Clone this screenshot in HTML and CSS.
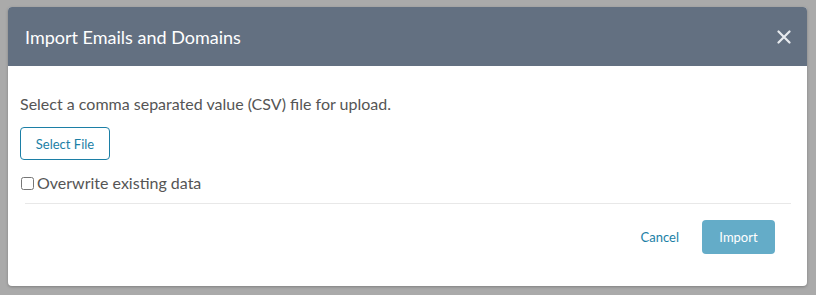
FILE: index.html
```html
<!DOCTYPE html>
<html lang="en">
  <head>
    <meta charset="UTF-8" />
    <meta name="viewport" content="width=device-width, initial-scale=1.0" />
    <title>Import Emails and Domains</title>
    <link rel="stylesheet" href="styles.css">
  </head>

  <body>
    <div class="modal">
      <div class="modal-header">
        <h2 class="modal-title">Import Emails and Domains</h2>
        <button class="close" aria-label="Close">
          <svg width="14" height="14" viewBox="0 0 14 14">
            <path d="M1.5 1.5 L12.5 12.5 M12.5 1.5 L1.5 12.5" stroke="#e8ebef" stroke-width="2.2" stroke-linecap="round" />
          </svg>
        </button>
      </div>
      <div class="modal-body">
        <p class="hint">Select a comma separated value (CSV) file for upload.</p>
        <button class="btn-outline">Select File</button>
        <label class="check">
          <input type="checkbox" />
          <span>Overwrite existing data</span>
        </label>
      </div>
      <div class="modal-footer">
        <button class="btn-link">Cancel</button>
        <button class="btn-primary">Import</button>
      </div>
    </div>
  </body>
</html>
```

FILE: styles.css
```css
* {
  box-sizing: border-box;
  padding: 0;
  margin: 0;
}
body {
  background: #aaaaaa;
  padding: 7px 9px 9px 8px;
  font-family: Lato, "Liberation Sans", sans-serif;
  height: 100vh;
}
.modal {
  width: 799px;
  height: 279px;
  background: white;
  border-radius: 4px;
  box-shadow: 0 1px 3px rgba(0, 0, 0, 0.25);
  overflow: hidden;
}
.modal-header {
  height: 59px;
  background: #637081;
  display: flex;
  align-items: center;
  justify-content: space-between;
  padding: 0 15px 0 17px;
}
.modal-title {
  color: white;
  font-size: 18px;
  font-weight: 400;
}
.close {
  background: none;
  border: none;
  width: 16px;
  height: 16px;
  display: flex;
  align-items: center;
  justify-content: center;
  cursor: pointer;
}
.modal-body {
  padding: 27px 12px 0 12px;
}
.hint {
  font-size: 16px;
  color: #555555;
  line-height: 22px;
}
.btn-outline {
  margin-top: 12px;
  width: 90px;
  height: 33px;
  border: 1px solid #1c7fa6;
  border-radius: 4px;
  background: white;
  color: #1c7fa6;
  font-family: inherit;
  font-size: 13px;
  cursor: pointer;
}
.check {
  display: flex;
  align-items: center;
  gap: 3px;
  margin-top: 12px;
  font-size: 16px;
  color: #555555;
  line-height: 22px;
}
.check input {
  width: 13px;
  height: 13px;
  margin: 0 0 0 1px;
}
.modal-footer {
  margin: 9px 16px 0 17px;
  border-top: 1px solid #e8e8e8;
  display: flex;
  justify-content: flex-end;
  align-items: center;
  gap: 23px;
  padding: 16px 16px 0 0;
}
.btn-link {
  background: none;
  border: none;
  color: #1c7fa6;
  font-family: inherit;
  font-size: 13px;
  cursor: pointer;
}
.btn-primary {
  width: 73px;
  height: 34px;
  border: none;
  border-radius: 4px;
  background: #64acc8;
  color: white;
  font-family: inherit;
  font-size: 13px;
  cursor: pointer;
}
```
